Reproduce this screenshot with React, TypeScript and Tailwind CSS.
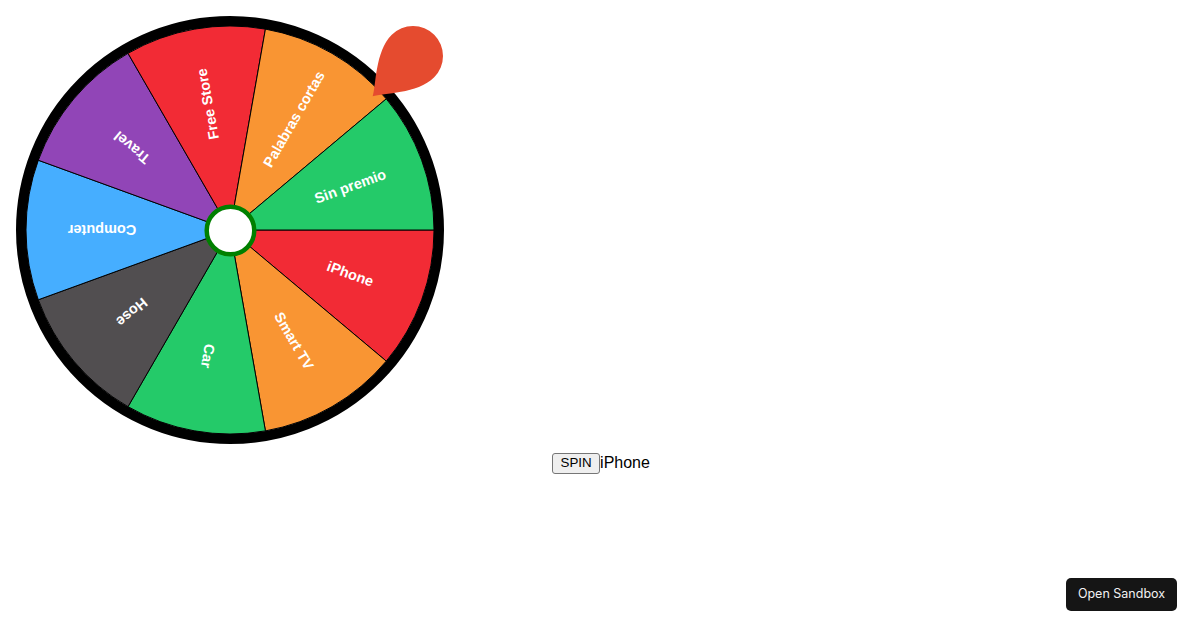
import React from "react";

const CX = 230;
const CY = 230;
const R = 204;

const segments = [
  { label: "iPhone", color: "#F22B35" },
  { label: "Smart TV", color: "#F99533" },
  { label: "Car", color: "#24CA69" },
  { label: "Hose", color: "#514E50" },
  { label: "Computer", color: "#46AEFF" },
  { label: "Travel", color: "#9145B7" },
  { label: "Free Store", color: "#F22B35" },
  { label: "Palabras cortas", color: "#F99533" },
  { label: "Sin premio", color: "#24CA69" },
];

function pt(angleDeg: number, r: number) {
  const a = (angleDeg * Math.PI) / 180;
  return [CX + r * Math.cos(a), CY + r * Math.sin(a)];
}

function Wheel() {
  const step = 360 / segments.length;
  return (
    <svg width="460" height="452" viewBox="0 0 460 452" className="block">
      {segments.map((s, i) => {
        const a0 = i * step;
        const a1 = (i + 1) * step;
        const [x0, y0] = pt(a0, R);
        const [x1, y1] = pt(a1, R);
        return (
          <path
            key={i}
            d={`M${CX},${CY} L${x0},${y0} A${R},${R} 0 0 1 ${x1},${y1} Z`}
            fill={s.color}
            stroke="#000"
            strokeWidth="1"
          />
        );
      })}
      {segments.map((s, i) => {
        const mid = i * step + step / 2;
        return (
          <text
            key={"t" + i}
            transform={`translate(${CX},${CY}) rotate(${mid}) translate(128,0)`}
            textAnchor="middle"
            dominantBaseline="central"
            fill="#fff"
            fontFamily="'Liberation Sans', Arial, sans-serif"
            fontWeight="700"
            fontSize="14.5"
          >
            {s.label}
          </text>
        );
      })}
      <circle cx={CX} cy={CY} r={209} fill="none" stroke="#000" strokeWidth="10" />
      <circle cx={CX + 0.5} cy={CY + 0.5} r={23.8} fill="#fff" stroke="#008000" strokeWidth="4.5" />
      <path
        transform="translate(413,56) rotate(45)"
        d="M0,57 C-5,47 -30,24 -30,0 A30,30 0 1 1 30,0 C30,24 5,47 0,57 Z"
        fill="#E54B2F"
      />
    </svg>
  );
}

export default function App() {
  return (
    <div className="relative w-[1200px] h-[630px] bg-white overflow-hidden font-['Liberation_Sans',Arial,sans-serif]">
      <Wheel />
      <div className="flex h-[22px] items-center justify-center">
        <button className="ml-[2px] h-[21px] w-[48px] rounded-[3px] border border-[#767676] bg-[#efefef] text-[13.33px] leading-none text-black font-['Liberation_Sans',Arial,sans-serif]">
          SPIN
        </button>
        <span className="text-[16px] text-black">iPhone</span>
      </div>
      <div className="absolute right-[23px] bottom-[19px] flex h-[33px] w-[111px] items-center justify-center rounded-[5px] bg-[#151515] text-[12.5px] text-[#f2f2f2] font-['Inter',sans-serif]">
        Open Sandbox
      </div>
    </div>
  );
}
